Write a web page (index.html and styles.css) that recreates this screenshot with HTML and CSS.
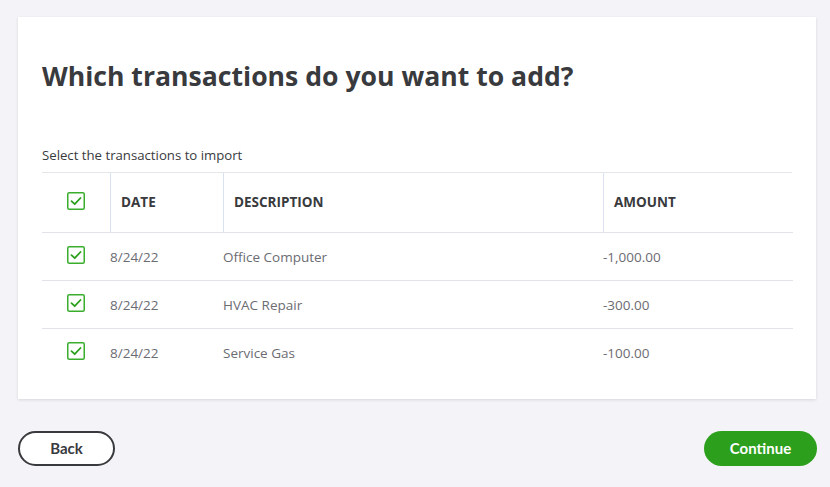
FILE: index.html
```html
<!DOCTYPE html>
<html>
<head>
<meta charset="utf-8">
<link rel="stylesheet" href="styles.css">
</head>
<body>
<div class="page">
  <section class="card">
    <h1 class="title">Which transactions do you want to add?</h1>
    <p class="subtitle">Select the transactions to import</p>
    <div class="table">
      <div class="row head">
        <div class="cell check"><svg class="cb" viewBox="0 0 18 18"><rect x="0.75" y="0.75" width="16.5" height="16.5" rx="1.5"/><path d="M4.5 9.2 L7.7 12.2 L13.5 6"/></svg></div>
        <div class="cell sep">DATE</div>
        <div class="cell sep">DESCRIPTION</div>
        <div class="cell sep">AMOUNT</div>
      </div>
      <div class="row">
        <div class="cell check"><svg class="cb" viewBox="0 0 18 18"><rect x="0.75" y="0.75" width="16.5" height="16.5" rx="1.5"/><path d="M4.5 9.2 L7.7 12.2 L13.5 6"/></svg></div>
        <div class="cell">8/24/22</div>
        <div class="cell">Office Computer</div>
        <div class="cell">-1,000.00</div>
      </div>
      <div class="row">
        <div class="cell check"><svg class="cb" viewBox="0 0 18 18"><rect x="0.75" y="0.75" width="16.5" height="16.5" rx="1.5"/><path d="M4.5 9.2 L7.7 12.2 L13.5 6"/></svg></div>
        <div class="cell">8/24/22</div>
        <div class="cell">HVAC Repair</div>
        <div class="cell">-300.00</div>
      </div>
      <div class="row last">
        <div class="cell check"><svg class="cb" viewBox="0 0 18 18"><rect x="0.75" y="0.75" width="16.5" height="16.5" rx="1.5"/><path d="M4.5 9.2 L7.7 12.2 L13.5 6"/></svg></div>
        <div class="cell">8/24/22</div>
        <div class="cell">Service Gas</div>
        <div class="cell">-100.00</div>
      </div>
    </div>
  </section>
  <div class="actions">
    <button class="btn back">Back</button>
    <button class="btn continue">Continue</button>
  </div>
</div>
</body>
</html>
```
FILE: styles.css
```css
html, body {
  margin: 0;
  padding: 0;
  background: #f4f4f8;
}
body {
  font-family: "Open Sans", "Liberation Sans", sans-serif;
  color: #393a3d;
}
.page {
  padding: 17px 13px 0 18px;
  width: 799px;
}
.card {
  background: #ffffff;
  width: 750px;
  padding: 42px 24px 23px 24px;
  box-shadow: 0 1px 3px rgba(0, 0, 0, 0.12);
}
.title {
  margin: 0;
  font-family: "Open Sans", "Liberation Sans", sans-serif;
  font-weight: 700;
  font-size: 26.6px;
  line-height: 34px;
  color: #393a3d;
}
.subtitle {
  margin: 53px 0 0 0;
  font-size: 13.2px;
  line-height: 18px;
  height: 18px;
  color: #393a3d;
  padding-bottom: 8px;
  border-bottom: 1px solid #e4e6ea;
}
.table {
  width: 751px;
}
.row {
  display: grid;
  grid-template-columns: 68px 113px 380px 190px;
  height: 47px;
  border-bottom: 1px solid #e1e3e8;
  align-items: center;
  font-size: 13.5px;
  color: #6b6c72;
}
.row.last {
  border-bottom: none;
}
.row.head {
  height: 59px;
  font-weight: 700;
  color: #393a3d;
  align-items: stretch;
}
.cell {
  display: flex;
  align-items: center;
  height: 100%;
}
.cell.check {
  justify-content: flex-start;
  padding-left: 25px;
}
.row .cell.check {
  padding-bottom: 4px;
  box-sizing: border-box;
}
.cell.sep {
  border-left: 1px solid #d9e2ee;
  padding-left: 10px;
  padding-bottom: 2px;
  box-sizing: border-box;
}
.row.head .cell.check {
  padding-bottom: 4px;
}
.cb {
  width: 18px;
  height: 18px;
  display: block;
}
.cb rect {
  fill: #ffffff;
  stroke: #3aae2c;
  stroke-width: 1.5;
}
.cb path {
  fill: none;
  stroke: #2ca01c;
  stroke-width: 1.8;
  stroke-linecap: round;
  stroke-linejoin: round;
}
.actions {
  display: flex;
  justify-content: space-between;
  margin-top: 32px;
}
.btn {
  font-family: Lato, "Liberation Sans", sans-serif;
  font-weight: 700;
  font-size: 15px;
  height: 35px;
  border-radius: 18px;
  cursor: pointer;
  padding: 0 0 2px 0;
}
.back {
  width: 97px;
  background: #ffffff;
  border: 2px solid #393a3d;
  color: #393a3d;
}
.continue {
  width: 113px;
  background: #2ca01c;
  border: none;
  color: #ffffff;
}
```
